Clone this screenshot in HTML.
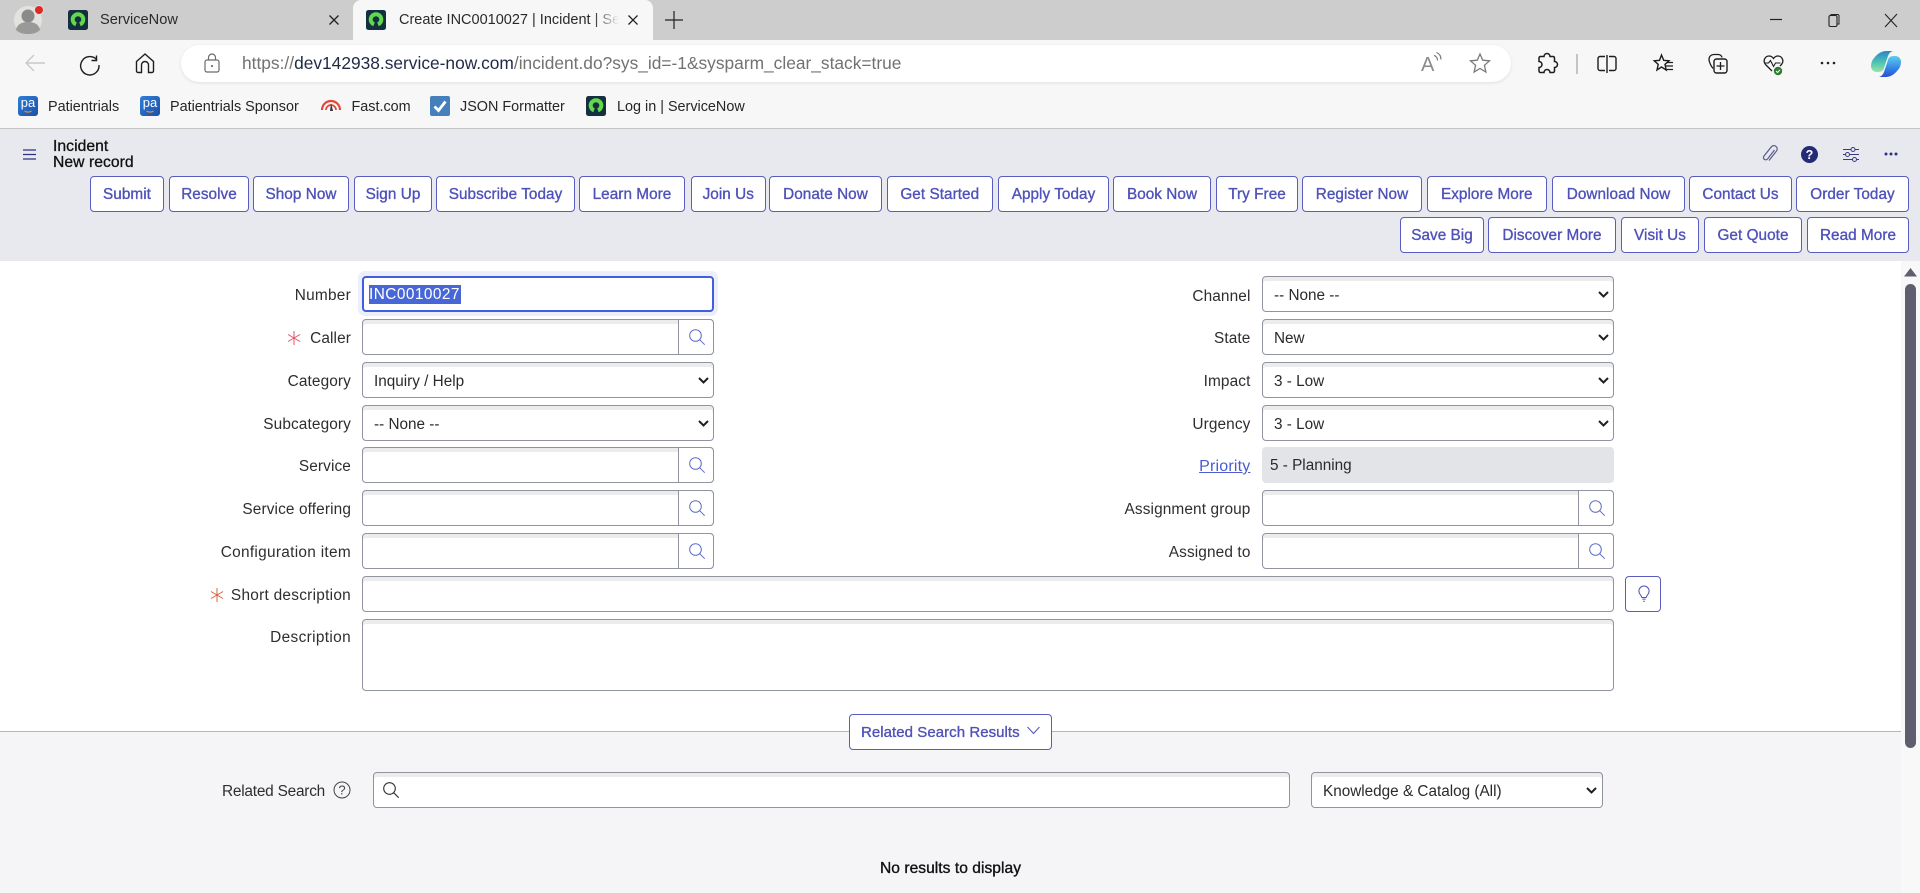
<!DOCTYPE html>
<html lang="en">
<head>
<meta charset="utf-8">
<title>Create INC0010027 | Incident | ServiceNow</title>
<style>
*{box-sizing:border-box}
html,body{margin:0;padding:0;width:1920px;height:893px;overflow:hidden;background:#fff;font-family:"Liberation Sans",sans-serif;color:#222}
.a{position:absolute}
svg{position:absolute;overflow:visible}
#strip{left:0;top:0;width:1920px;height:40px;background:#cdcdcd}
#tab{left:353px;top:0;width:300px;height:40px;background:#f7f7f7;border-radius:8px 8px 0 0}
.tt{font-size:14.5px;line-height:20px;height:20px;white-space:nowrap;color:#2a2a2a}
#toolbar{left:0;top:40px;width:1920px;height:89px;background:#f7f7f7;border-bottom:1px solid #c6c6c6}
#url{left:181px;top:45px;width:1330px;height:37px;background:#fff;border-radius:19px;box-shadow:0 1px 3px rgba(0,0,0,.1)}
#urltext{left:242px;top:52px;font-size:17.35px;line-height:22px;white-space:nowrap;color:#74716e}
#urltext b{font-weight:400;color:#1f2a44}
.bm{font-size:14.4px;line-height:20px;top:97px;white-space:nowrap;color:#262626}
#hdr{left:0;top:129px;width:1920px;height:132px;background:#e8e9ee}
.ht{left:53px;font-size:15.7px;line-height:18px;color:#111;-webkit-text-stroke:.3px #111;letter-spacing:.05px;white-space:nowrap}
.btn{position:absolute;height:36px;background:#fff;border:1px solid #5a5dc0;border-radius:4px;color:#4f52b8;font:400 15.3px/32px "Liberation Sans",sans-serif;-webkit-text-stroke:.35px #4f52b8;text-align:center;padding:2px 0 0;white-space:nowrap;letter-spacing:.05px}
.lb{font-size:15.4px;line-height:20px;height:20px;text-align:right;white-space:nowrap;color:#2e2e2e;letter-spacing:.12px}
.lbl{left:100px;width:251px}
.lbr{left:1000px;width:250.5px}
.in{position:absolute;height:36px;background:#fff;border:1px solid #9094a0;border-radius:4px;box-shadow:inset 0 4px 0 #ececec;padding:0;margin:0;outline:0;display:block}
select.in{font:15.3px "Liberation Sans",sans-serif;color:#2a2a2a;padding:2px 0 0 11px;-webkit-appearance:none;appearance:none}
.l1{left:362px;width:352px}
.r1{left:1262px;width:352px}
.lk{position:absolute;height:36px;width:36px;background:#fff;border:1px solid #9094a0;border-radius:0 4px 4px 0;padding:0}
.lk svg{left:9px;top:8px}
.chev{width:11px;height:7px;pointer-events:none}
#rel{left:0;top:731px;width:1901px;height:162px;background:#f5f5f7;border-top:1px solid #b6b6be}
</style>
</head>
<body>
<div class="a" id="strip"></div>
<svg style="left:0;top:0" width="60" height="40">
  <circle cx="28" cy="20" r="14" fill="#e4e2df"/>
  <circle cx="28" cy="16" r="6.5" fill="#8a8a8a"/>
  <path d="M16 30c1-6 6-8 12-8s11 2 12 8c-3 3-7 4-12 4s-9-1-12-4z" fill="#999"/>
  <circle cx="39" cy="10" r="5" fill="#e0e0e0"/>
  <circle cx="39" cy="10" r="4" fill="#de2a24"/>
</svg>
<svg style="left:68px;top:10px" width="20" height="20"><rect width="20" height="20" rx="2.5" fill="#14303f"/><path d="M8 14.4a5.3 5.3 0 1 1 4 0" fill="none" stroke="#62d84e" stroke-width="4"/></svg>
<div class="a tt" style="left:100px;top:10px;font-size:14.6px">ServiceNow</div>
<svg style="left:329px;top:15px" width="10" height="10"><path d="M.5.5l9 9M9.500.5l-9 9" stroke="#222" stroke-width="1.300"/></svg>
<div class="a" id="tab"></div>
<svg style="left:366px;top:10px" width="20" height="20"><rect width="20" height="20" rx="2.5" fill="#14303f"/><path d="M8 14.4a5.3 5.3 0 1 1 4 0" fill="none" stroke="#62d84e" stroke-width="4"/></svg>
<div class="a tt" style="left:399px;top:10px;width:220px;overflow:hidden;-webkit-mask-image:linear-gradient(90deg,#000 88%,transparent);mask-image:linear-gradient(90deg,#000 88%,transparent)">Create INC0010027 | Incident | ServiceNow</div>
<svg style="left:628px;top:15px" width="10" height="10"><path d="M.5.5l9 9M9.500.5l-9 9" stroke="#222" stroke-width="1.300"/></svg>
<svg style="left:665px;top:11px" width="18" height="18"><path d="M9 0v18M0 9h18" stroke="#222" stroke-width="1.200"/></svg>
<svg style="left:1770px;top:14px" width="130" height="14">
  <path d="M0 5.500h12" stroke="#222" stroke-width="1.200"/>
  <rect x="59" y="1.500" width="8" height="11" rx="1.500" fill="none" stroke="#222" stroke-width="1.100"/>
  <path d="M61 1.500V.5h6.500a1.500 1.500 0 0 1 1.500 1.500v8h-2" fill="none" stroke="#222" stroke-width="1"/>
  <path d="M115 0l12 13M127 0l-12 13" stroke="#222" stroke-width="1.100"/>
</svg>

<div class="a" id="toolbar"></div>
<div class="a" id="url"></div>
<svg style="left:24px;top:52px" width="22" height="22"><path d="M21 11H2M10 3l-8 8 8 8" fill="none" stroke="#c9c9c9" stroke-width="1.400"/></svg>
<svg style="left:79px;top:52px" width="22" height="22"><path d="M17.500 3.500v5h-5M18 8a9.200 9.200 0 1 0 2 5" fill="none" stroke="#1e1e1e" stroke-width="1.400"/></svg>
<svg style="left:135px;top:52px" width="20" height="22"><path d="M1.500 9.500L10 2l8.500 7.500V19a1.500 1.500 0 0 1-1.500 1.500h-3.500V13a3.500 3.500 0 0 0-7 0v7.500H3A1.500 1.500 0 0 1 1.500 19z" fill="none" stroke="#1e1e1e" stroke-width="1.400"/></svg>
<svg style="left:204px;top:53px" width="16" height="20"><rect x="1" y="7" width="14" height="12" rx="2" fill="none" stroke="#6b6b6b" stroke-width="1.200"/><path d="M4.500 7V4.500a3.500 3.500 0 0 1 7 0V7" fill="none" stroke="#6b6b6b" stroke-width="1.200"/><circle cx="8" cy="13" r="1" fill="#555"/></svg>
<div class="a" id="urltext">https://<b>dev142938.service-now.com</b>/incident.do?sys_id=-1&amp;sysparm_clear_stack=true</div>

<svg style="left:1421px;top:52px" width="20" height="24"><text x="0" y="19" font-family="Liberation Sans" font-size="20" fill="#8a8a8a">A</text><path d="M13 3.500c2 .5 3.500 2.500 3.500 5M15.500 .5c2.500 1 4.500 3.500 4.500 7" fill="none" stroke="#777" stroke-width="1.200"/></svg>
<svg style="left:1470px;top:53px" width="20" height="20"><path d="M10 1l2.700 6.200 6.800.6-5.100 4.500 1.500 6.700L10 15.500 4.100 19l1.500-6.700L.5 7.800l6.800-.6z" fill="none" stroke="#7a7a7a" stroke-width="1.300"/></svg>
<svg style="left:1537px;top:53px" width="20" height="22"><path d="M7 3.500a3 3 0 0 1 6 0H16a1.500 1.500 0 0 1 1.500 1.500v3.500a3 3 0 0 1 0 6V18A1.500 1.500 0 0 1 16 19.500h-3a3 3 0 0 0-6 0H3.500A1.500 1.500 0 0 1 2 18v-3.500a3 3 0 0 0 0-6V5a1.500 1.500 0 0 1 1.500-1.500z" fill="none" stroke="#1d1d1d" stroke-width="1.500"/></svg>
<div class="a" style="left:1576px;top:54px;width:1.500px;height:20px;background:#c4c4c4"></div>
<svg style="left:1597px;top:55px" width="20" height="18"><path d="M8 1.500H3A2 2 0 0 0 1 3.500v10a2 2 0 0 0 2 2h5M12 1.500h5a2 2 0 0 1 2 2v10a2 2 0 0 1-2 2h-5M10 0v18" fill="none" stroke="#1d1d1d" stroke-width="1.400"/></svg>
<svg style="left:1653px;top:54px" width="22" height="20"><path d="M8.500 1l2.200 5.300 5.300.5-4 3.600 1.200 5.600L8.500 13 4 16l1.200-5.600-4-3.600 5.300-.5z" fill="none" stroke="#1d1d1d" stroke-width="1.400"/><path d="M14 8.500h6M13 12h7M12 15.500h8" stroke="#1d1d1d" stroke-width="1.200"/></svg>
<svg style="left:1708px;top:53px" width="22" height="22"><path d="M5 15.500C3 13 1 9 1 6.500 1 3 3.500 1.500 6 1.500h4c2 0 3.500 1 4 3" fill="none" stroke="#1d1d1d" stroke-width="1.300"/><rect x="6" y="6" width="13" height="14" rx="2.500" fill="#f7f7f7" stroke="#1d1d1d" stroke-width="1.400"/><path d="M12.500 9v8M8.500 13h8" stroke="#1d1d1d" stroke-width="1.300"/></svg>
<svg style="left:1763px;top:54px" width="22" height="22"><path d="M9 17L2.500 10.500C-.5 7 2 2 6 2c2 0 3.500 1 4.500 2.500C11.500 3 13 2 15 2c4 0 6.500 5 3.500 8.500L17 12" fill="none" stroke="#1d1d1d" stroke-width="1.300"/><path d="M1.500 9h4l2-2.500 3 6 2-3.500h5" fill="none" stroke="#1d1d1d" stroke-width="1.100"/><circle cx="15" cy="17" r="4.200" fill="#2f7d32"/><path d="M13 17l1.500 1.500L17 15.800" fill="none" stroke="#fff" stroke-width="1"/></svg>
<svg style="left:1820px;top:61px" width="16" height="4"><circle cx="2" cy="2" r="1.300" fill="#222"/><circle cx="8" cy="2" r="1.300" fill="#222"/><circle cx="14" cy="2" r="1.300" fill="#222"/></svg>
<svg style="left:1871px;top:51px" width="30" height="26" viewBox="0 0 30 26">
  <defs>
    <linearGradient id="cp1" x1="0" y1="0" x2="0" y2="1"><stop offset="0" stop-color="#2a86c8"/><stop offset=".55" stop-color="#4fc4b4"/><stop offset="1" stop-color="#98e4a4"/></linearGradient>
    <linearGradient id="cp2" x1="0" y1="0" x2="0" y2="1"><stop offset="0" stop-color="#5ccdf0"/><stop offset=".6" stop-color="#3484e4"/><stop offset="1" stop-color="#2a4fd0"/></linearGradient>
  </defs>
  <path d="M15 0H22C18 1 17 5 16 8L13 17C12 21 9 21 6 21C2 21 0 18 0 15C0 13 .5 12 1 10C4 5 9 0 15 0z" fill="url(#cp1)"/>
  <path d="M15 26H8C12 25 13 21 14 18L17 9C18 5 21 5 24 5C28 5 30 8 30 11C30 13 29.500 14 29 16C26 21 21 26 15 26z" fill="url(#cp2)"/>
</svg>

<svg style="left:18px;top:96px" width="20" height="20"><defs><linearGradient id="pg" x1="0" y1="0" x2="1" y2="1"><stop offset="0" stop-color="#2f7fd8"/><stop offset="1" stop-color="#1d4fa6"/></linearGradient></defs><rect width="20" height="20" rx="3" fill="url(#pg)"/><text x="10" y="11" text-anchor="middle" font-family="Liberation Sans" font-size="13" fill="#fff">pa</text><path d="M6.500 15c2 1.500 5 1.500 7 0" fill="none" stroke="#f08a30" stroke-width="1.200"/></svg>
<div class="a bm" style="left:48px">Patientrials</div>
<svg style="left:140px;top:96px" width="20" height="20"><rect width="20" height="20" rx="3" fill="url(#pg)"/><text x="10" y="11" text-anchor="middle" font-family="Liberation Sans" font-size="13" fill="#fff">pa</text><path d="M6.500 15c2 1.500 5 1.500 7 0" fill="none" stroke="#f08a30" stroke-width="1.200"/></svg>
<div class="a bm" style="left:170px">Patientrials Sponsor</div>
<svg style="left:320px;top:97px" width="22" height="16"><path d="M2 13a9 9 0 0 1 18 0" fill="none" stroke="#e0483c" stroke-width="2.200"/><path d="M6 13a5 5 0 0 1 10 0" fill="none" stroke="#e0483c" stroke-width="1.700"/><path d="M11 6l2 8h-3z" fill="#333"/></svg>
<div class="a bm" style="left:351.500px">Fast.com</div>
<svg style="left:430px;top:96px" width="20" height="20"><rect width="20" height="20" rx="2" fill="#457fbc"/><path d="M4.500 10.500l4 4 7-9" fill="none" stroke="#fff" stroke-width="2.800"/></svg>
<div class="a bm" style="left:460px">JSON Formatter</div>
<svg style="left:586px;top:96px" width="20" height="20"><rect width="20" height="20" rx="2.500" fill="#14303f"/><path d="M8 14.400a5.300 5.300 0 1 1 4 0" fill="none" stroke="#62d84e" stroke-width="4"/></svg>
<div class="a bm" style="left:617px">Log in | ServiceNow</div>

<div class="a" id="hdr"></div>
<svg style="left:23px;top:149px" width="14" height="11"><path d="M0 1h13M0 5.500h13M0 10h13" stroke="#2f3180" stroke-width="1.200"/></svg>
<div class="a ht" style="top:138px">Incident</div>
<div class="a ht" style="top:154px">New record</div>
<svg style="left:1762px;top:145px" width="16" height="18"><path d="M12.500 5L5.500 14a2.300 2.300 0 0 1-3.500-3l7.500-9.300a3.300 3.300 0 0 1 5 4.300L7 15.500" fill="none" stroke="#5a5c88" stroke-width="1.200"/></svg>
<svg style="left:1801px;top:146px" width="17" height="17"><circle cx="8.500" cy="8.500" r="8.500" fill="#252a74"/><text x="8.500" y="13" text-anchor="middle" font-family="Liberation Sans" font-weight="700" font-size="12.500" fill="#fff">?</text></svg>
<svg style="left:1843px;top:147px" width="17" height="15"><path d="M0 2.500h16M0 7.500h16M0 12.500h16" stroke="#393b85" stroke-width="1.100"/><circle cx="10" cy="2.500" r="2" fill="#e8e9ee" stroke="#393b85"/><circle cx="4.500" cy="7.500" r="2" fill="#e8e9ee" stroke="#393b85"/><circle cx="11.500" cy="12.500" r="2" fill="#e8e9ee" stroke="#393b85"/></svg>
<svg style="left:1884px;top:152px" width="14" height="4"><circle cx="2" cy="2" r="1.500" fill="#2f3180"/><circle cx="7" cy="2" r="1.500" fill="#2f3180"/><circle cx="12" cy="2" r="1.500" fill="#2f3180"/></svg>

<button class="btn" style="top:176px;left:90px;width:74px">Submit</button>
<button class="btn" style="top:176px;left:169px;width:80px">Resolve</button>
<button class="btn" style="top:176px;left:253px;width:96px">Shop Now</button>
<button class="btn" style="top:176px;left:354px;width:78px">Sign Up</button>
<button class="btn" style="top:176px;left:436px;width:139px">Subscribe Today</button>
<button class="btn" style="top:176px;left:579px;width:106px">Learn More</button>
<button class="btn" style="top:176px;left:691px;width:74.500px">Join Us</button>
<button class="btn" style="top:176px;left:769px;width:113px">Donate Now</button>
<button class="btn" style="top:176px;left:887px;width:105.500px">Get Started</button>
<button class="btn" style="top:176px;left:998px;width:111px">Apply Today</button>
<button class="btn" style="top:176px;left:1113px;width:98px">Book Now</button>
<button class="btn" style="top:176px;left:1216px;width:82px">Try Free</button>
<button class="btn" style="top:176px;left:1302px;width:120px">Register Now</button>
<button class="btn" style="top:176px;left:1427px;width:119.500px">Explore More</button>
<button class="btn" style="top:176px;left:1552px;width:133px">Download Now</button>
<button class="btn" style="top:176px;left:1689px;width:103px">Contact Us</button>
<button class="btn" style="top:176px;left:1796px;width:113px">Order Today</button>
<button class="btn" style="top:217px;left:1400px;width:84px">Save Big</button>
<button class="btn" style="top:217px;left:1488px;width:128px">Discover More</button>
<button class="btn" style="top:217px;left:1621px;width:78px">Visit Us</button>
<button class="btn" style="top:217px;left:1704px;width:98px">Get Quote</button>
<button class="btn" style="top:217px;left:1807px;width:102px">Read More</button>

<!-- left column -->
<div class="a lb lbl" style="top:286px;letter-spacing:.25px">Number</div>
<div class="a" style="left:358px;top:271px;width:360px;height:45px;border-radius:7px;background:#eceffb"></div>
<div class="a" style="left:362px;top:276px;width:352px;height:35.500px;background:#fff;border:2px solid #3f5fdc;border-radius:4px"></div>
<div class="a" style="left:369px;top:285px;width:92px;height:19px;background:#4767d6;color:#fff;font-size:15.400px;line-height:20px;letter-spacing:.45px;white-space:nowrap">INC0010027</div>

<svg style="left:287px;top:331px" width="14" height="14"><path d="M7 0v14M1 3.500l12 7M13 3.500l-12 7" stroke="#e0526a" stroke-width="1"/></svg>
<div class="a lb lbl" style="top:329px">Caller</div>
<input class="in l1" style="top:319px" aria-label="Caller"><button class="lk" style="left:678px;top:319px" aria-label="Lookup"><svg width="18" height="18"><circle cx="7.500" cy="7.500" r="5.800" fill="none" stroke="#5f6cc0" stroke-width="1"/><path d="M11.700 11.700l5 5" stroke="#5f6cc0" stroke-width="1"/></svg></button>

<div class="a lb lbl" style="top:372px">Category</div>
<select class="in l1" style="top:362px" aria-label="Category"><option>Inquiry / Help</option></select>
<svg class="chev" style="left:698px;top:377px" viewBox="0 0 11 7"><path d="M1 1l4.500 4.500L10 1" fill="none" stroke="#1f1f1f" stroke-width="2"/></svg>

<div class="a lb lbl" style="top:415px">Subcategory</div>
<select class="in l1" style="top:405px" aria-label="Subcategory"><option>-- None --</option></select>
<svg class="chev" style="left:698px;top:420px" viewBox="0 0 11 7"><path d="M1 1l4.500 4.500L10 1" fill="none" stroke="#1f1f1f" stroke-width="2"/></svg>

<div class="a lb lbl" style="top:457px">Service</div>
<input class="in l1" style="top:447px" aria-label="Service"><button class="lk" style="left:678px;top:447px" aria-label="Lookup"><svg width="18" height="18"><circle cx="7.500" cy="7.500" r="5.800" fill="none" stroke="#5f6cc0" stroke-width="1"/><path d="M11.700 11.700l5 5" stroke="#5f6cc0" stroke-width="1"/></svg></button>

<div class="a lb lbl" style="top:500px">Service offering</div>
<input class="in l1" style="top:490px" aria-label="Service offering"><button class="lk" style="left:678px;top:490px" aria-label="Lookup"><svg width="18" height="18"><circle cx="7.500" cy="7.500" r="5.800" fill="none" stroke="#5f6cc0" stroke-width="1"/><path d="M11.700 11.700l5 5" stroke="#5f6cc0" stroke-width="1"/></svg></button>

<div class="a lb lbl" style="top:543px;letter-spacing:.3px">Configuration item</div>
<input class="in l1" style="top:533px" aria-label="Configuration item"><button class="lk" style="left:678px;top:533px" aria-label="Lookup"><svg width="18" height="18"><circle cx="7.500" cy="7.500" r="5.800" fill="none" stroke="#5f6cc0" stroke-width="1"/><path d="M11.700 11.700l5 5" stroke="#5f6cc0" stroke-width="1"/></svg></button>

<svg style="left:210px;top:588px" width="14" height="14"><path d="M7 0v14M1 3.500l12 7M13 3.500l-12 7" stroke="#d9603c" stroke-width="1"/></svg>
<div class="a lb lbl" style="top:586px;letter-spacing:.27px">Short description</div>
<input class="in" style="top:576px;left:362px;width:1252px" aria-label="Short description">
<button class="btn" style="top:576px;left:1625px;width:36px;padding:0" aria-label="Suggestions"><svg style="left:12px;top:9px" width="12" height="17" viewBox="0 0 14 20"><path d="M4.500 13.500C4 11 1 9.500 1 6a6 6 0 0 1 12 0c0 3.500-3 5-3.500 7.500z" fill="none" stroke="#4f52b8" stroke-width="1.200"/><path d="M5 15.500h4M6 18h2" stroke="#4f52b8" stroke-width="1.200"/></svg></button>

<div class="a lb lbl" style="top:628px;letter-spacing:.35px">Description</div>
<textarea class="in" style="top:619px;left:362px;width:1252px;height:71.500px;resize:none" aria-label="Description"></textarea>

<!-- right column -->
<div class="a lb lbr" style="top:286.500px">Channel</div>
<select class="in r1" style="top:276px" aria-label="Channel"><option>-- None --</option></select>
<svg class="chev" style="left:1598px;top:291px" viewBox="0 0 11 7"><path d="M1 1l4.500 4.500L10 1" fill="none" stroke="#1f1f1f" stroke-width="2"/></svg>
<div class="a lb lbr" style="top:329px">State</div>
<select class="in r1" style="top:319px" aria-label="State"><option>New</option></select>
<svg class="chev" style="left:1598px;top:334px" viewBox="0 0 11 7"><path d="M1 1l4.500 4.500L10 1" fill="none" stroke="#1f1f1f" stroke-width="2"/></svg>
<div class="a lb lbr" style="top:372px">Impact</div>
<select class="in r1" style="top:362px" aria-label="Impact"><option>3 - Low</option></select>
<svg class="chev" style="left:1598px;top:377px" viewBox="0 0 11 7"><path d="M1 1l4.500 4.500L10 1" fill="none" stroke="#1f1f1f" stroke-width="2"/></svg>
<div class="a lb lbr" style="top:415px">Urgency</div>
<select class="in r1" style="top:405px" aria-label="Urgency"><option>3 - Low</option></select>
<svg class="chev" style="left:1598px;top:420px" viewBox="0 0 11 7"><path d="M1 1l4.500 4.500L10 1" fill="none" stroke="#1f1f1f" stroke-width="2"/></svg>
<div class="a lb lbr" style="top:457px;color:#4a5cd0;text-decoration:underline;font-size:16px;letter-spacing:.2px">Priority</div>
<div class="a" style="left:1262px;top:447px;width:352px;height:36px;background:#e3e4e8;border-radius:4px;font-size:15.300px;line-height:37px;padding-left:8px;color:#2a2a2a">5 - Planning</div>
<div class="a lb lbr" style="top:500px">Assignment group</div>
<input class="in r1" style="top:490px" aria-label="Assignment group"><button class="lk" style="left:1578px;top:490px" aria-label="Lookup"><svg width="18" height="18"><circle cx="7.500" cy="7.500" r="5.800" fill="none" stroke="#5f6cc0" stroke-width="1"/><path d="M11.700 11.700l5 5" stroke="#5f6cc0" stroke-width="1"/></svg></button>
<div class="a lb lbr" style="top:543px">Assigned to</div>
<input class="in r1" style="top:533px" aria-label="Assigned to"><button class="lk" style="left:1578px;top:533px" aria-label="Lookup"><svg width="18" height="18"><circle cx="7.500" cy="7.500" r="5.800" fill="none" stroke="#5f6cc0" stroke-width="1"/><path d="M11.700 11.700l5 5" stroke="#5f6cc0" stroke-width="1"/></svg></button>

<!-- related -->
<div class="a" id="rel"></div>
<button class="btn" style="top:714px;left:849px;width:202.500px;height:36px;text-align:left;padding:2px 0 0 11px;font-size:15px">Related Search Results<svg style="left:177px;top:11px" width="13" height="9"><path d="M.5 1l6 6.500L12.500 1" fill="none" stroke="#4f52b8" stroke-width="1"/></svg></button>
<div class="a lb" style="left:222px;top:782px;width:103px;text-align:left;letter-spacing:-.22px">Related Search</div>
<svg style="left:333px;top:781px" width="18" height="18"><circle cx="9" cy="9" r="8" fill="none" stroke="#444" stroke-width="1"/><text x="9" y="13.500" text-anchor="middle" font-family="Liberation Sans" font-size="13" fill="#444">?</text></svg>
<input class="in" style="top:772px;left:373px;width:917px" aria-label="Related Search">
<svg style="left:382px;top:781px" width="18" height="18"><circle cx="7.500" cy="7.500" r="5.800" fill="none" stroke="#333" stroke-width="1.100"/><path d="M11.700 11.700l5 5" stroke="#333" stroke-width="1.100"/></svg>
<select class="in" style="top:772px;left:1311px;width:292px" aria-label="Search source"><option>Knowledge &amp; Catalog (All)</option></select>
<svg class="chev" style="left:1586px;top:787px" viewBox="0 0 11 7"><path d="M1 1l4.500 4.500L10 1" fill="none" stroke="#1f1f1f" stroke-width="2"/></svg>
<div class="a" style="left:880px;top:859px;font-size:15.600px;line-height:20px;color:#111;-webkit-text-stroke:.35px #111;white-space:nowrap;letter-spacing:.03px">No results to display</div>

<!-- scrollbar -->
<div class="a" style="left:1901px;top:261px;width:19px;height:632px;background:#f8f8f9"></div>
<svg style="left:1904px;top:268px" width="14" height="9"><path d="M6.500 0L13 8.500H0z" fill="#5e5e6e"/></svg>
<div class="a" style="left:1905px;top:284px;width:11px;height:464px;background:#5e5e6e;border-radius:6px"></div>
</body>
</html>
